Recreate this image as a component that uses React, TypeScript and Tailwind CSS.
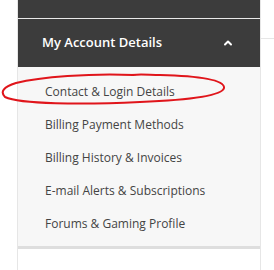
import { ChevronUp } from "lucide-react"

const links = [
  "Contact & Login Details",
  "Billing Payment Methods",
  "Billing History & Invoices",
  "E-mail Alerts & Subscriptions",
  "Forums & Gaming Profile",
]

export default function App() {
  return (
    <div className="relative w-[274px] h-[270px] bg-white overflow-hidden font-['Open_Sans',sans-serif]">
      <div className="flex">
        <div className="ml-[17px] w-[244px] border-x border-[#e6e6e6] h-[270px]">
          <div className="h-[18px] bg-[#3c3c3c]" />
          <div className="h-px bg-[#e8e8e8]" />
          <div className="h-[48px] bg-[#3c3c3c] flex items-center justify-between pl-[24px] pr-[26px]">
            <span className="text-white font-semibold text-[13px]">My Account Details</span>
            <ChevronUp className="w-3 h-3 text-white" strokeWidth={4} />
          </div>
          <ul className="bg-[#f7f7f7] border-b-[3px] border-[#dedede] pt-[8px] pb-[6px]">
            {links.map((link) => (
              <li key={link} className="h-[33px] flex items-center pl-[27px] text-[12px] text-[#444]">
                {link}
              </li>
            ))}
          </ul>
        </div>
        <div className="flex-1 mt-[38px] h-px bg-[#e6e6e6]" />
      </div>
      <svg className="absolute left-0 top-[70px]" width="240" height="40" viewBox="0 0 240 40" fill="none">
        <path
          d="M134 5 C 90 3, 40 7, 16 13 C 3 17, 0 22, 5 27 C 20 34, 80 35, 140 32 C 190 30, 222 26, 224 18 C 225 10, 200 6, 160 5 C 150 5, 140 4, 132 5"
          stroke="#e0151b"
          strokeWidth="2"
          strokeLinecap="round"
        />
      </svg>
    </div>
  )
}
